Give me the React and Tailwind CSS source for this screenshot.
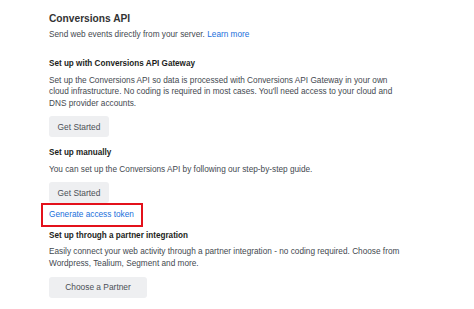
const Heading = ({ children, className = "" }) => (
  <h3 className={`text-[8.15px] font-bold leading-[11.5px] text-[#1c1e21] ${className}`}>{children}</h3>
);

const Paragraph = ({ children, className = "" }) => (
  <p className={`text-[8.25px] leading-[11.6px] text-[#444950] ${className}`}>{children}</p>
);

const GrayButton = ({ children, width }) => (
  <button
    type="button"
    className={`${width} flex h-[21px] items-center justify-center rounded-[3px] bg-[#eeeff1] text-[8.4px] text-[#4b4f56]`}
  >
    {children}
  </button>
);

export default function App() {
  return (
    <div className="h-[309px] w-[474px] overflow-hidden bg-white font-['Liberation_Sans',Arial,sans-serif]">
      <div className="flex flex-col items-start pl-[49px] pt-[12px]">
        <h2 className="text-[10.2px] font-bold leading-[14px] text-[#333]">Conversions API</h2>
        <Paragraph className="mt-[3px]">
          Send web events directly from your server.{" "}
          <a className="text-[#216fdb]">Learn more</a>
        </Paragraph>

        <Heading className="mt-[17px]">Set up with Conversions API Gateway</Heading>
        <Paragraph className="mt-[5.5px] w-[350px]">
          Set up the Conversions API so data is processed with Conversions API Gateway in your own
          cloud infrastructure. No coding is required in most cases. You'll need access to your cloud and
          DNS provider accounts.
        </Paragraph>
        <div className="mt-[7px]">
          <GrayButton width="w-[60px]">Get Started</GrayButton>
        </div>

        <Heading className="mt-[10px]">Set up manually</Heading>
        <Paragraph className="mt-[5px]">
          You can set up the Conversions API by following our step-by-step guide.
        </Paragraph>
        <div className="mt-[7px]">
          <GrayButton width="w-[60px]">Get Started</GrayButton>
        </div>

        <a className="-ml-[8px] border-2 border-[#e3111b] py-[4px] pl-[6px] pr-[7px] text-[8.25px] leading-[11.5px] text-[#216fdb]">
          Generate access token
        </a>

        <Heading className="mt-[3px]">Set up through a partner integration</Heading>
        <Paragraph className="mt-[5px] w-[370px]">
          Easily connect your web activity through a partner integration - no coding required. Choose from
          Wordpress, Tealium, Segment and more.
        </Paragraph>
        <div className="mt-[7px]">
          <GrayButton width="w-[98px]">Choose a Partner</GrayButton>
        </div>
      </div>
    </div>
  );
}
